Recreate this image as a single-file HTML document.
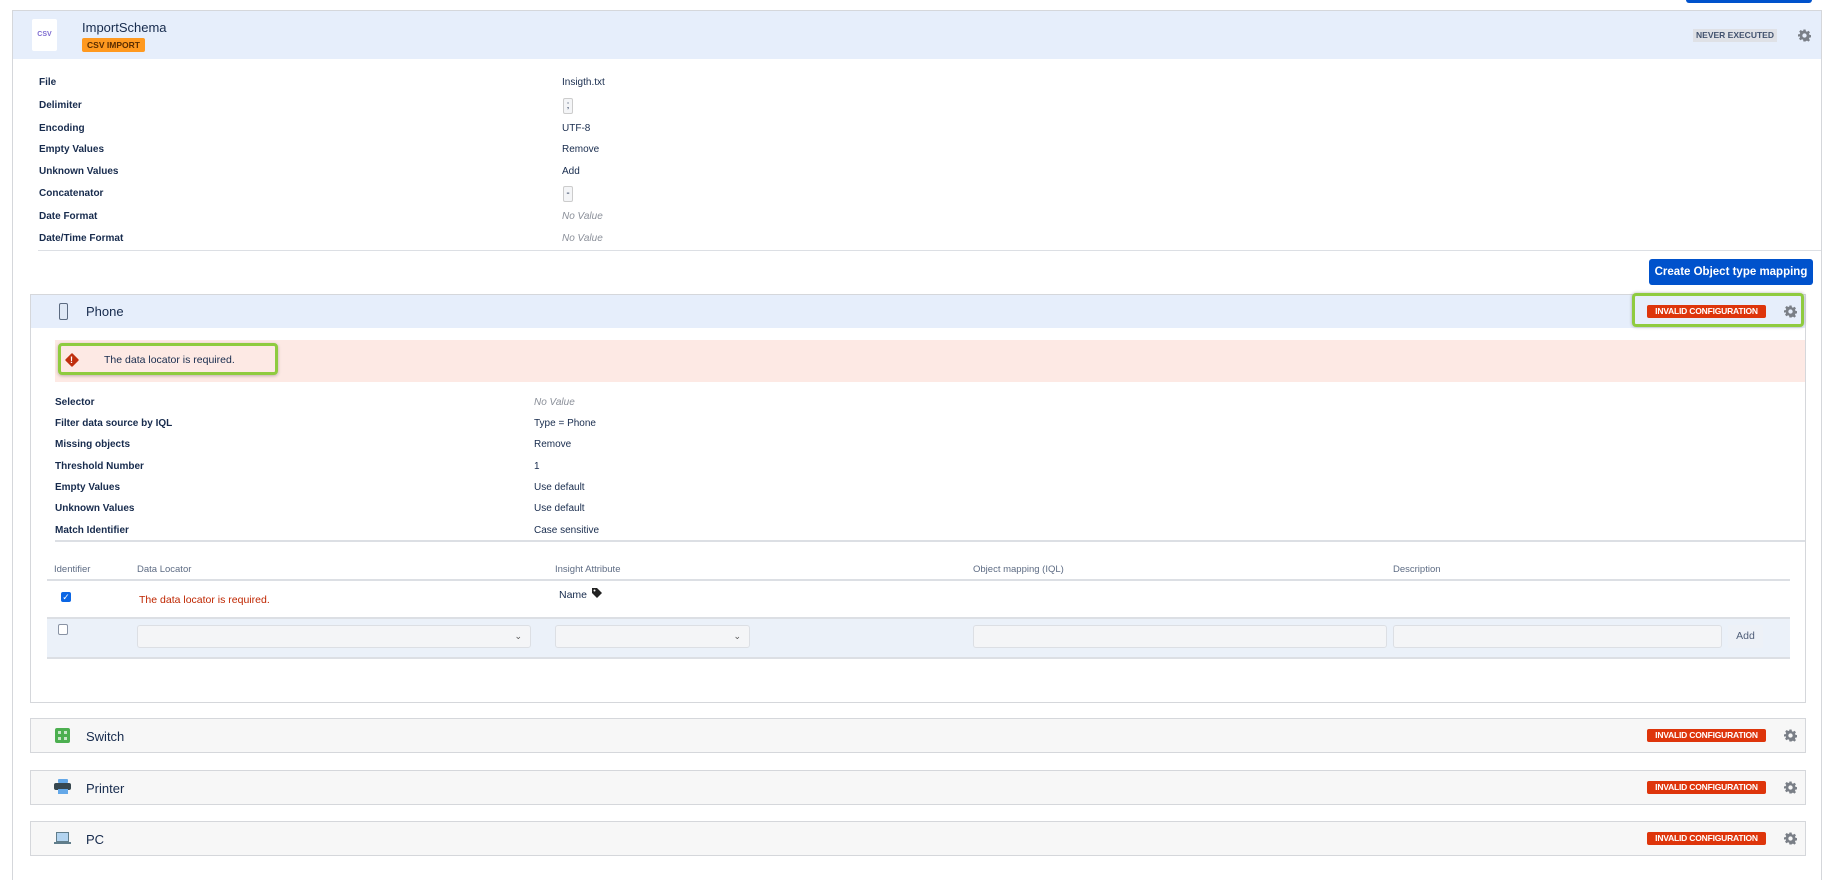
<!DOCTYPE html>
<html><head><meta charset="utf-8"><style>
*{margin:0;padding:0;box-sizing:border-box}
body{width:1837px;height:871px;background:#fff;font-family:"Liberation Sans",sans-serif;color:#172b4d;position:relative;overflow:hidden}
.a{position:absolute}
.lbl{position:absolute;font-size:10px;font-weight:bold;color:#172b4d;line-height:14px}
.val{position:absolute;font-size:10px;color:#172b4d;line-height:14px}
.nv{color:#8a8f99;font-style:italic}
.box{position:absolute;border:1px solid #ccc;border-radius:2px;background:#f4f5f7;width:10px;height:16px;font-size:10px;text-align:center;line-height:14px}
.inv{position:absolute;background:#de350b;color:#fff;font-size:8.5px;font-weight:bold;line-height:13px;height:13px;width:119px;text-align:center;border-radius:2px;letter-spacing:-0.2px}
.sub{position:absolute;left:30px;width:1776px;border:1px solid #d5d7db;background:#f7f7f7}
.th{position:absolute;font-size:9.5px;color:#5e6c84;top:564px}
.inp{position:absolute;border:1px solid #dcdfe4;background:#f4f5f7;border-radius:3px;top:625px;height:23px}
.chev{position:absolute;right:8px;top:5px;font-size:9px;color:#555}
.g{position:absolute;width:13px;height:13px}
</style></head><body>
<svg width="0" height="0" style="position:absolute"><defs><symbol id="gear" viewBox="0 0 24 24"><path fill="#7a7f87" d="M10 1h4l.6 3.2 2 .9 2.7-1.9 2.8 2.8-1.9 2.7.9 2 3.2.6v4l-3.2.6-.9 2 1.9 2.7-2.8 2.8-2.7-1.9-2 .9L14 23h-4l-.6-3.2-2-.9-2.7 1.9-2.8-2.8 1.9-2.7-.9-2L0 14v-4l3.2-.6.9-2-1.9-2.7 2.8-2.8 2.7 1.9 2-.9zM12 8a4 4 0 100 8 4 4 0 000-8z"/></symbol></defs></svg>
<div class="a" style="left:1686px;top:0;width:126px;height:3px;background:#0052cc;border-radius:0 0 3px 3px"></div>
<div class="a" style="left:12px;top:10px;width:1810px;height:870px;border:1px solid #d5d7db;border-bottom:none"></div>
<div class="a" style="left:13px;top:11px;width:1808px;height:48px;background:#e6eefb"></div>
<div class="a" style="left:32px;top:19px;width:25px;height:32px;background:#fff;border-radius:2px;font-size:7px;font-weight:bold;color:#7d6bd0;text-align:center;line-height:32px">CSV</div>
<div class="a" style="left:82px;top:20px;font-size:13px;color:#172b4d">ImportSchema</div>
<div class="a" style="left:82px;top:38px;width:63px;height:14px;background:#ff991f;border-radius:2px;font-size:8.5px;font-weight:bold;color:#5a2d00;text-align:center;line-height:14px">CSV IMPORT</div>
<div class="a" style="left:1693px;top:29px;width:84px;height:13px;background:#dfe1e6;font-size:8.5px;font-weight:bold;color:#42526e;text-align:center;line-height:13px">NEVER EXECUTED</div>
<svg class="g" style="left:1798px;top:29px"><use href="#gear"/></svg>

<div class="lbl" style="left:39px;top:76px">File</div><div class="val" style="left:562px;top:76px">Insigth.txt</div>
<div class="lbl" style="left:39px;top:99px">Delimiter</div><div class="box" style="left:563px;top:98px">;</div>
<div class="lbl" style="left:39px;top:122px">Encoding</div><div class="val" style="left:562px;top:122px">UTF-8</div>
<div class="lbl" style="left:39px;top:143px">Empty Values</div><div class="val" style="left:562px;top:143px">Remove</div>
<div class="lbl" style="left:39px;top:165px">Unknown Values</div><div class="val" style="left:562px;top:165px">Add</div>
<div class="lbl" style="left:39px;top:187px">Concatenator</div><div class="box" style="left:563px;top:186px">-</div>
<div class="lbl" style="left:39px;top:210px">Date Format</div><div class="val nv" style="left:562px;top:210px">No Value</div>
<div class="lbl" style="left:39px;top:232px">Date/Time Format</div><div class="val nv" style="left:562px;top:232px">No Value</div>
<div class="a" style="left:38px;top:250px;width:1783px;height:1px;background:#dcdfe4"></div>

<div class="a" style="left:1649px;top:259px;width:164px;height:26px;background:#0052cc;border-radius:3px;color:#fff;font-size:11.5px;font-weight:bold;text-align:center;line-height:26px">Create Object type mapping</div>

<div class="a" style="left:30px;top:294px;width:1776px;height:409px;border:1px solid #d5d7db;background:#fff"></div>
<div class="a" style="left:31px;top:295px;width:1774px;height:33px;background:#e6eefb"></div>
<div class="a" style="left:59px;top:303px;width:9px;height:17px;border:1.5px solid #5b6a80;border-radius:2px;background:#dfe8f5"></div>
<div class="a" style="left:86px;top:304px;font-size:13px;color:#172b4d">Phone</div>
<div class="a" style="left:1632px;top:293px;width:172px;height:34px;border:3px solid #8fcb3f;border-radius:4px;box-shadow:0 0 3px rgba(0,0,0,.3)"></div>
<div class="inv" style="left:1647px;top:305px">INVALID CONFIGURATION</div>
<svg class="g" style="left:1784px;top:305px"><use href="#gear"/></svg>

<div class="a" style="left:55px;top:340px;width:1750px;height:42px;background:#fde9e4"></div>
<div class="a" style="left:58px;top:343px;width:220px;height:32px;border:3px solid #8fcb3f;border-radius:4px;box-shadow:0 1px 3px rgba(0,0,0,.25)"></div>
<div class="a" style="left:67px;top:355px;width:10px;height:10px;background:#c0300f;transform:rotate(45deg);border-radius:1px"></div>
<div class="a" style="left:70px;top:353px;width:4px;font-size:9px;font-weight:bold;color:#fff;line-height:14px">!</div>
<div class="a" style="left:104px;top:354px;font-size:10.5px;color:#172b4d">The data locator is required.</div>

<div class="lbl" style="left:55px;top:396px">Selector</div><div class="val nv" style="left:534px;top:396px">No Value</div>
<div class="lbl" style="left:55px;top:417px">Filter data source by IQL</div><div class="val" style="left:534px;top:417px">Type = Phone</div>
<div class="lbl" style="left:55px;top:438px">Missing objects</div><div class="val" style="left:534px;top:438px">Remove</div>
<div class="lbl" style="left:55px;top:460px">Threshold Number</div><div class="val" style="left:534px;top:460px">1</div>
<div class="lbl" style="left:55px;top:481px">Empty Values</div><div class="val" style="left:534px;top:481px">Use default</div>
<div class="lbl" style="left:55px;top:502px">Unknown Values</div><div class="val" style="left:534px;top:502px">Use default</div>
<div class="lbl" style="left:55px;top:524px">Match Identifier</div><div class="val" style="left:534px;top:524px">Case sensitive</div>
<div class="a" style="left:55px;top:540px;width:1750px;height:2px;background:#dcdfe4"></div>

<div class="th" style="left:54px">Identifier</div>
<div class="th" style="left:137px">Data Locator</div>
<div class="th" style="left:555px">Insight Attribute</div>
<div class="th" style="left:973px">Object mapping (IQL)</div>
<div class="th" style="left:1393px">Description</div>
<div class="a" style="left:47px;top:579px;width:1743px;height:2px;background:#dcdfe4"></div>
<div class="a" style="left:61px;top:592px;width:10px;height:10px;background:#0b66e4;border-radius:2px;color:#fff;font-size:9px;line-height:10px;text-align:center">✓</div>
<div class="a" style="left:139px;top:594px;font-size:10.5px;color:#bf2600">The data locator is required.</div>
<div class="a" style="left:559px;top:589px;font-size:10.5px;color:#172b4d">Name</div>
<svg class="a" style="left:591px;top:587px" width="12" height="12" viewBox="0 0 12 12"><path d="M1 1h5l5 5-5 5-5-5z" fill="#222"/><circle cx="3.5" cy="3.5" r="1" fill="#fff"/></svg>
<div class="a" style="left:47px;top:617px;width:1743px;height:42px;background:#ebf1f9;border-top:2px solid #dcdfe4;border-bottom:2px solid #dcdfe4"></div>
<div class="a" style="left:58px;top:624px;width:10px;height:11px;border:1px solid #8993a4;border-radius:2px;background:#fff"></div>
<div class="inp" style="left:137px;width:394px"><span class="chev">⌄</span></div>
<div class="inp" style="left:555px;width:195px"><span class="chev">⌄</span></div>
<div class="inp" style="left:973px;width:414px"></div>
<div class="inp" style="left:1393px;width:329px"></div>
<div class="a" style="left:1728px;top:625px;width:35px;height:23px;background:#edf1f7;font-size:10.5px;color:#505f79;text-align:center;line-height:23px">Add</div>

<div class="sub" style="top:718px;height:35px"></div>
<div class="a" style="left:55px;top:728px;width:15px;height:15px;background:#4caf50;border-radius:2px"></div>
<div class="a" style="left:58px;top:731px;width:3px;height:3px;background:#c8e6c9"></div><div class="a" style="left:64px;top:731px;width:3px;height:3px;background:#c8e6c9"></div>
<div class="a" style="left:58px;top:737px;width:3px;height:3px;background:#c8e6c9"></div><div class="a" style="left:64px;top:737px;width:3px;height:3px;background:#c8e6c9"></div>
<div class="a" style="left:86px;top:729px;font-size:13px">Switch</div>
<div class="inv" style="left:1647px;top:729px">INVALID CONFIGURATION</div>
<svg class="g" style="left:1784px;top:729px"><use href="#gear"/></svg>

<div class="sub" style="top:770px;height:35px"></div>
<div class="a" style="left:58px;top:779px;width:10px;height:4px;background:#64a8e8;border-radius:1px"></div>
<div class="a" style="left:54px;top:783px;width:17px;height:7px;background:#37474f;border-radius:2px"></div>
<div class="a" style="left:58px;top:789px;width:10px;height:5px;background:#64a8e8"></div>
<div class="a" style="left:86px;top:781px;font-size:13px">Printer</div>
<div class="inv" style="left:1647px;top:781px">INVALID CONFIGURATION</div>
<svg class="g" style="left:1784px;top:781px"><use href="#gear"/></svg>

<div class="sub" style="top:821px;height:35px"></div>
<div class="a" style="left:56px;top:832px;width:13px;height:10px;background:#b3d4f0;border:1px solid #607d8b"></div>
<div class="a" style="left:54px;top:842px;width:17px;height:2px;background:#607d8b"></div>
<div class="a" style="left:86px;top:832px;font-size:13px">PC</div>
<div class="inv" style="left:1647px;top:832px">INVALID CONFIGURATION</div>
<svg class="g" style="left:1784px;top:832px"><use href="#gear"/></svg>
</body></html>
